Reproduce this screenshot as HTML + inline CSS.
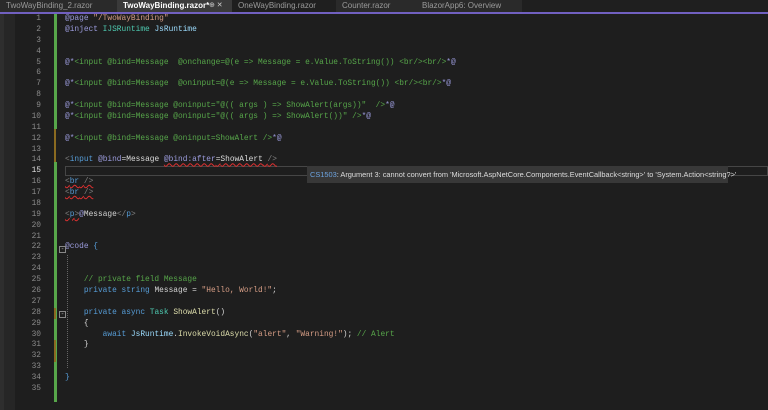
<!DOCTYPE html>
<html><head><style>
body{margin:0;width:768px;height:410px;background:#1e1e1e;overflow:hidden;position:relative;font-family:"Liberation Sans",sans-serif}
.tabs{position:absolute;left:0;top:0;width:768px;height:12px;background:#1f1f1f}
.tab{position:absolute;top:0;height:12px;font-size:8px;line-height:12px;color:#9a9a9a;padding-left:6px;box-sizing:border-box;background:#2a2a2a;white-space:nowrap;overflow:hidden}
.purple{position:absolute;left:0;top:12px;width:768px;height:2px;background:#7160c0}
.strip{position:absolute;left:0;top:14px;width:15px;height:396px;background:#262626}
.strip2{position:absolute;left:0;top:14px;width:4px;height:396px;background:#2e2e2e}
.ln{position:absolute;left:15px;width:26px;text-align:right;font-family:"Liberation Mono",monospace;font-size:7.85px;line-height:10.88px;color:#8a8a8a}
.code{position:absolute;left:65px;font-family:"Liberation Mono",monospace;font-size:7.85px;line-height:10.88px;white-space:pre;color:#d4d4d4}
.g{color:#57a64a}.b{color:#569cd6}.k{color:#9b9bdc}.t{color:#4ec9b0}.s{color:#d69d85}.y{color:#dcdcaa}.l{color:#9cdcfe}.gr{color:#808080}.w{color:#dcdcdc}
.bar{position:absolute;left:54px;width:3px;background:#57a64a}
.u{text-decoration:underline wavy #e03030;text-decoration-thickness:1px;text-underline-offset:1px}
</style></head><body>
<div class="tabs"></div>
<div class="tab" style="left:0;width:117px">TwoWayBinding_2.razor</div>
<div class="tab" style="left:117px;width:115px;background:#3a3a3a;color:#fff;font-weight:bold">TwoWayBinding.razor*<span style="position:absolute;left:92px;font-weight:normal;color:#ccc;font-size:7px">⊕ ✕</span></div>
<div class="tab" style="left:232px;width:104px;background:#1f1f1f">OneWayBinding.razor</div>
<div class="tab" style="left:336px;width:80px">Counter.razor</div>
<div class="tab" style="left:416px;width:106px">BlazorApp6: Overview</div>
<div class="purple"></div>
<div class="strip"></div><div class="strip2"></div>
<div class="bar" style="top:14px;height:115px"></div>
<div class="bar" style="top:129px;height:33px;background:#8a6a20;width:2px"></div>
<div class="bar" style="top:162px;height:240px"></div>
<div class="bar" style="top:308px;height:11px;background:#8a6a20;width:2px"></div>
<div class="bar" style="top:340px;height:22px;background:#8a6a20;width:2px"></div>
<div style="position:absolute;left:65px;top:166px;width:703px;height:10px;border:1px solid #464646;box-sizing:border-box"></div>
<div id="c"></div>
<div style="position:absolute;left:307px;top:166px;width:421px;height:17px;background:#383838;font-size:7.4px;line-height:17px;color:#ddd;padding-left:3px;box-sizing:border-box;white-space:nowrap"><span style="color:#6ca3e0">CS1503</span>: Argument 3: cannot convert from 'Microsoft.AspNetCore.Components.EventCallback&lt;string&gt;' to 'System.Action&lt;string?&gt;'</div>
<div style="position:absolute;left:59px;top:246px;width:7px;height:7px;border:1px solid #888;box-sizing:border-box;font-size:7px;line-height:5px;color:#aaa;text-align:center">-</div>
<div style="position:absolute;left:59px;top:311px;width:7px;height:7px;border:1px solid #888;box-sizing:border-box;font-size:7px;line-height:5px;color:#aaa;text-align:center">-</div>
<div style="position:absolute;left:67px;top:255px;height:113px;border-left:1px dotted #666"></div>
<script>
var L=[
'<span class="k">@page</span> <span class="s">"/TwoWayBinding"</span>',
'<span class="k">@inject</span> <span class="t">IJSRuntime</span> <span class="l">JsRuntime</span>',
'','',
'<span class="k">@*</span><span class="g">&lt;input @bind=Message  @onchange=@(e =&gt; Message = e.Value.ToString()) &lt;br/&gt;&lt;br/&gt;</span><span class="k">*@</span>',
'',
'<span class="k">@*</span><span class="g">&lt;input @bind=Message  @oninput=@(e =&gt; Message = e.Value.ToString()) &lt;br/&gt;&lt;br/&gt;</span><span class="k">*@</span>',
'',
'<span class="k">@*</span><span class="g">&lt;input @bind=Message @oninput="@(( args ) =&gt; ShowAlert(args))"  /&gt;</span><span class="k">*@</span>',
'<span class="k">@*</span><span class="g">&lt;input @bind=Message @oninput="@(( args ) =&gt; ShowAlert())" /&gt;</span><span class="k">*@</span>',
'',
'<span class="k">@*</span><span class="g">&lt;input @bind=Message @oninput=ShowAlert /&gt;</span><span class="k">*@</span>',
'',
'<span class="gr">&lt;</span><span class="b">input</span> <span class="k">@bind</span>=<span class="w">Message</span> <span class="u"><span class="k">@bind:after</span>=<span class="w">ShowAlert</span> <span class="gr">/&gt;</span></span>',
'',
'<span class="u"><span class="gr">&lt;</span><span class="b">br</span> <span class="gr">/&gt;</span></span>',
'<span class="u"><span class="gr">&lt;</span><span class="b">br</span> <span class="gr">/&gt;</span></span>',
'',
'<span class="u"><span class="gr">&lt;</span><span class="b">p</span><span class="gr">&gt;</span></span><span class="k">@</span>Message<span class="gr">&lt;/</span><span class="b">p</span><span class="gr">&gt;</span>',
'','',
'<span class="k">@code</span> <span class="b">{</span>',
'','',
'    <span class="g">// private field Message</span>',
'    <span class="b">private</span> <span class="b">string</span> Message = <span class="s">"Hello, World!"</span>;',
'',
'    <span class="b">private</span> <span class="b">async</span> <span class="t">Task</span> <span class="y">ShowAlert</span>()',
'    {',
'        <span class="b">await</span> <span class="l">JsRuntime</span>.<span class="y">InvokeVoidAsync</span>(<span class="s">"alert"</span>, <span class="s">"Warning!"</span>); <span class="g">// Alert</span>',
'    }',
'','',
'<span class="b">}</span>',
''];
var h='';
for(var i=0;i<35;i++){var y=14+i*10.88;
h+='<div class="ln" style="top:'+y+'px;'+(i==14?'color:#e0e0e0':'')+'">'+(i+1)+'</div>';
h+='<div class="code" style="top:'+y+'px">'+L[i]+'</div>';}
document.getElementById('c').innerHTML=h;
</script>
</body></html>
